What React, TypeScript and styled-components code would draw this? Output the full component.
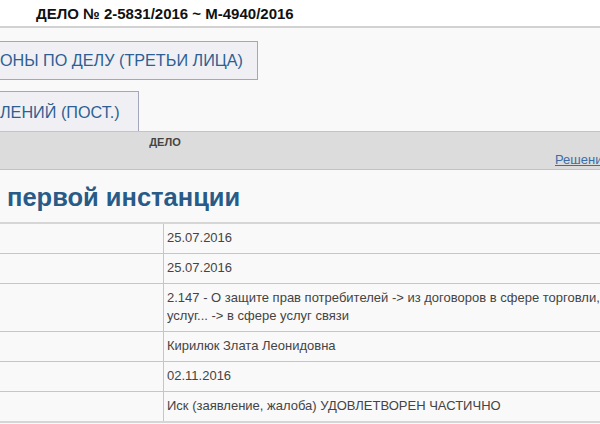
import styled, { createGlobalStyle } from "styled-components"

const GlobalStyle = createGlobalStyle`
  body {
    margin: 0;
    background: #f9f9f9;
    font-family: "Liberation Sans", Arial, sans-serif;
    overflow: hidden;
  }
`

const Page = styled.div`
  width: 600px;
  height: 424px;
  overflow: hidden;
`

const TopBar = styled.div`
  height: 28px;
  background: #ffffff;
  border-bottom: 2px solid #d2d2d2;
  box-sizing: border-box;
  padding-left: 36px;
  display: flex;
  align-items: center;
`

const CaseTitle = styled.h1`
  margin: 0;
  font-size: 15px;
  font-weight: bold;
  color: #111;
  white-space: nowrap;
`

const Tabs = styled.div`
  display: flex;
  flex-direction: column;
  align-items: flex-start;
  padding-top: 13px;
  gap: 11px;
`

const Tab = styled.div<{ $width: number; $open?: boolean }>`
  width: ${p => p.$width}px;
  height: ${p => (p.$open ? 40 : 39)}px;
  box-sizing: border-box;
  background: #f0f0f4;
  border: 1px solid #a4a6bb;
  border-left: none;
  border-bottom: ${p => (p.$open ? "none" : "1px solid #a4a6bb")};
  display: flex;
  align-items: center;
  padding-top: ${p => (p.$open ? 1 : 0)}px;
  color: #2d5f93;
  font-size: 16.2px;
  white-space: nowrap;
`

const HeaderBar = styled.div`
  width: 660px;
  height: 39px;
  box-sizing: border-box;
  background: #dcdcdc;
  border-top: 1px solid #c4c4c4;
  border-bottom: 1px solid #c2c2c2;
  display: flex;
  white-space: nowrap;
`

const HeaderCell = styled.div`
  width: 330px;
  flex-shrink: 0;
  text-align: center;
  font-size: 11px;
  font-weight: bold;
  color: #444;
  padding-top: 4px;
`

const HeaderLink = styled.a`
  margin-left: 225px;
  flex-shrink: 0;
  align-self: flex-end;
  padding-bottom: 2px;
  font-size: 13px;
  color: #3a6ea8;
  text-decoration: underline;
`

const Section = styled.div`
  height: 52px;
  display: flex;
  align-items: center;
  padding-left: 7px;
`

const SectionTitle = styled.h2`
  margin: 0;
  padding-top: 2px;
  font-size: 25.5px;
  font-weight: bold;
  color: #285b87;
  white-space: nowrap;
`

const Table = styled.div`
  width: 640px;
  border-top: 2px solid #d6d6d6;
  border-bottom: 2px solid #d6d6d6;
`

const Row = styled.div`
  display: grid;
  grid-template-columns: 164px 1fr;
  border-bottom: 1px solid #c6c6c6;

  &:last-child {
    border-bottom: none;
  }
`

const LabelCell = styled.div`
  border-right: 1px solid #c6c6c6;
`

const ValueCell = styled.div`
  padding: 5px 3px 6px 3px;
  font-size: 13px;
  line-height: 18px;
  color: #444;
  max-width: 470px;
`

const rows = [
  "25.07.2016",
  "25.07.2016",
  "2.147 - О защите прав потребителей -> из договоров в сфере торговли, услуг... -> в сфере услуг связи",
  "Кирилюк Злата Леонидовна",
  "02.11.2016",
  "Иск (заявление, жалоба) УДОВЛЕТВОРЕН ЧАСТИЧНО",
]

export default function App() {
  return (
    <Page>
      <GlobalStyle />
      <TopBar>
        <CaseTitle>ДЕЛО № 2-5831/2016 ~ М-4940/2016</CaseTitle>
      </TopBar>
      <Tabs>
        <Tab $width={258}>ОНЫ ПО ДЕЛУ (ТРЕТЬИ ЛИЦА)</Tab>
        <Tab $width={139} $open>ЛЕНИЙ (ПОСТ.)</Tab>
      </Tabs>
      <HeaderBar>
        <HeaderCell>ДЕЛО</HeaderCell>
        <HeaderLink href="#">Решения</HeaderLink>
      </HeaderBar>
      <Section>
        <SectionTitle>первой инстанции</SectionTitle>
      </Section>
      <Table>
        {rows.map((value, i) => (
          <Row key={i}>
            <LabelCell />
            <ValueCell>{value}</ValueCell>
          </Row>
        ))}
      </Table>
    </Page>
  )
}
